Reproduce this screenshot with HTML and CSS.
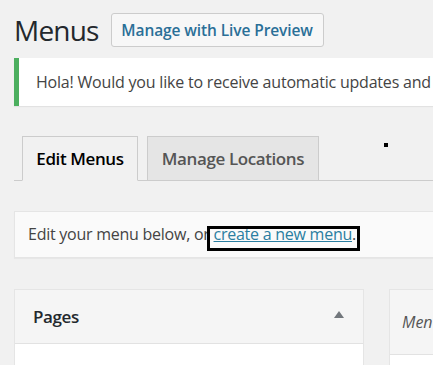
FILE: index.html
```html
<!DOCTYPE html>
<html>
<head>
<meta charset="utf-8">
<link rel="stylesheet" href="styles.css">
</head>
<body>
<div class="wrap">
  <div class="title-row">
    <h1 class="title">Menus</h1>
    <a class="btn">Manage with Live Preview</a>
  </div>
  <div class="notice">Hola! Would you like to receive automatic updates and</div>
  <nav class="tabs">
    <span class="tab tab-active">Edit Menus</span>
    <span class="tab">Manage Locations</span>
    <span class="dot"></span>
  </nav>
  <div class="manage">
    <span>Edit your menu below, or <a class="link">create a new menu</a>.</span>
    <span class="mark"></span>
  </div>
  <div class="cols">
    <div class="panel">
      <div class="panel-head">
        <span class="panel-title">Pages</span>
        <svg class="arrow" width="10" height="7" viewBox="0 0 10 7"><path d="M0 7 L5 0 L10 7 Z" fill="#72777c"/></svg>
      </div>
      <div class="panel-body"></div>
    </div>
    <div class="panel-right">
      <div class="right-head"><em>Men</em></div>
      <div class="panel-body"></div>
    </div>
  </div>
</div>
</body>
</html>
```
FILE: styles.css
```css
html, body {
  margin: 0;
  padding: 0;
  background: #f1f1f1;
  overflow: hidden;
  font-family: "Open Sans", "Noto Sans", sans-serif;
}
.wrap {
  padding-left: 14px;
  width: 700px;
}
.title-row {
  display: flex;
  align-items: center;
  gap: 12px;
  padding-top: 13px;
  height: 34px;
}
.title {
  margin: 0;
  font-size: 28px;
  font-weight: 400;
  letter-spacing: -0.8px;
  color: #23282d;
  line-height: 34px;
}
.btn {
  box-sizing: border-box;
  height: 34px;
  width: 213px;
  display: flex;
  align-items: center;
  justify-content: center;
  border: 1px solid #cccccc;
  border-radius: 3px;
  background: #f7f7f7;
  color: #2a6f97;
  font-size: 15.5px;
  font-weight: 600;
  letter-spacing: -0.1px;
}
.notice {
  margin-top: 11px;
  height: 48px;
  box-sizing: border-box;
  border-left: 5px solid #4caf5f;
  background: #fff;
  box-shadow: 0 1px 1px rgba(0,0,0,0.06);
  padding-left: 17px;
  line-height: 48px;
  font-size: 16px;
  color: #444;
  letter-spacing: -0.2px;
  white-space: nowrap;
}
.tabs {
  position: relative;
  margin-top: 30px;
  display: flex;
  gap: 9px;
  padding-left: 8px;
  border-bottom: 1px solid #cccccc;
  height: 44px;
}
.tab {
  box-sizing: border-box;
  height: 45px;
  border: 1px solid #cccccc;
  background: #e5e5e5;
  font-size: 17px;
  font-weight: 600;
  color: #555;
  display: flex;
  align-items: center;
  justify-content: center;
  width: 172px;
  letter-spacing: -0.4px;
}
.tab-active {
  width: 116px;
  background: #f1f1f1;
  border-bottom-color: #f1f1f1;
  color: #000;
}
.dot {
  position: absolute;
  left: 370px;
  top: 7px;
  width: 4px;
  height: 4px;
  background: #000;
}
.manage {
  position: relative;
  margin-top: 30px;
  height: 47px;
  box-sizing: border-box;
  background: #fafafa;
  border: 1px solid #e5e5e5;
  box-shadow: 0 1px 1px rgba(0,0,0,0.04);
  padding-left: 13px;
  line-height: 45px;
  font-size: 16px;
  color: #444;
  letter-spacing: -0.25px;
}
.link {
  color: #2a7ea1;
  text-decoration: underline;
}
.mark {
  position: absolute;
  left: 192px;
  top: 14px;
  width: 147px;
  height: 19px;
  border: 3px solid #000;
}
.cols {
  margin-top: 31px;
  display: flex;
  gap: 25px;
}
.panel {
  width: 350px;
  box-sizing: border-box;
  border: 1px solid #e5e5e5;
  background: #fff;
}
.panel-head {
  height: 53px;
  background: #f5f5f5;
  border-bottom: 1px solid #e2e2e2;
  display: flex;
  align-items: center;
  justify-content: space-between;
  padding: 0 19px 0 18px;
}
.panel-title {
  font-size: 17px;
  font-weight: 600;
  color: #23282d;
  letter-spacing: -0.4px;
}
.arrow {
  margin-top: -4px;
}
.panel-body {
  height: 40px;
  background: #fff;
}
.panel-right {
  flex: 1;
  border: 1px solid #e5e5e5;
  background: #fff;
}
.right-head {
  height: 64px;
  background: #f5f5f5;
  border-bottom: 1px solid #e2e2e2;
  padding-left: 12px;
  display: flex;
  align-items: center;
  font-size: 16px;
  color: #555;
}
```
